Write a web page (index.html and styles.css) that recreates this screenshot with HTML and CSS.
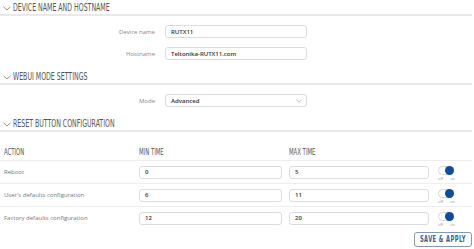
FILE: index.html
```html
<!DOCTYPE html>
<html lang="en">
<head>
  <meta charset="UTF-8" />
  <title>System - Administration</title>
  <link rel="stylesheet" href="styles.css">
</head>
<body>

<div class="page">

  <div class="section">
    <div class="section-head">
      <svg class="chev" width="8" height="5" viewBox="0 0 8 5"><path d="M0.5 0.8 L4 4 L7.5 0.8" fill="none" stroke="#888" stroke-width="0.9"/></svg>
      <span class="title">DEVICE NAME AND HOSTNAME</span>
    </div>
    <div class="field">
      <label>Device name</label>
      <div class="input">RUTX11</div>
    </div>
    <div class="field">
      <label>Hostname</label>
      <div class="input">Teltonika-RUTX11.com</div>
    </div>
  </div>

  <div class="section">
    <div class="section-head">
      <svg class="chev" width="8" height="5" viewBox="0 0 8 5"><path d="M0.5 0.8 L4 4 L7.5 0.8" fill="none" stroke="#888" stroke-width="0.9"/></svg>
      <span class="title">WEBUI MODE SETTINGS</span>
    </div>
    <div class="field">
      <label>Mode</label>
      <div class="input select">
        <span>Advanced</span>
        <svg width="6" height="4" viewBox="0 0 6 4"><path d="M0.5 0.7 L3 3.2 L5.5 0.7" fill="none" stroke="#aaa" stroke-width="0.8"/></svg>
      </div>
    </div>
  </div>

  <div class="section">
    <div class="section-head">
      <svg class="chev" width="8" height="5" viewBox="0 0 8 5"><path d="M0.5 0.8 L4 4 L7.5 0.8" fill="none" stroke="#888" stroke-width="0.9"/></svg>
      <span class="title">RESET BUTTON CONFIGURATION</span>
    </div>

    <div class="grid-head">
      <span>ACTION</span>
      <span>MIN TIME</span>
      <span>MAX TIME</span>
      <span></span>
    </div>
    <div id="rows"></div>

    <div class="actions">
      <button class="save"><span>SAVE &amp; APPLY</span></button>
    </div>
  </div>

</div>

<script>
const resetActions = [
  { name: "Reboot", min: 0, max: 5 },
  { name: "User's defaults configuration", min: 6, max: 11 },
  { name: "Factory defaults configuration", min: 12, max: 20 }
];

const rows = document.getElementById("rows");
resetActions.forEach(a => {
  const row = document.createElement("div");
  row.className = "grid-row";
  row.innerHTML = `
    <span class="action">${a.name}</span>
    <div class="input">${a.min}</div>
    <div class="input">${a.max}</div>
    <div class="switch">
      <div class="track"><div class="knob"></div></div>
      <div class="switch-labels"><span>off</span><span>on</span></div>
    </div>`;
  rows.appendChild(row);
});
</script>

</body>
</html>
```

FILE: styles.css
```css
body {
  margin: 0;
  font-family: "Open Sans", sans-serif;
  background: #fff;
  color: #666;
}

.page {
  width: 472px;
}

.section-head {
  display: flex;
  align-items: center;
  height: 14px;
  border-bottom: 2px solid #e9e9e9;
  padding-left: 3px;
}

.chev {
  margin-right: 2px;
  margin-top: 2px;
}

.title {
  font-family: "Liberation Sans Narrow", "DejaVu Sans Condensed", sans-serif;
  font-size: 11px;
  color: #555;
  display: inline-block;
  transform: scaleX(0.63);
  transform-origin: left center;
  white-space: nowrap;
}

.field {
  display: flex;
  align-items: center;
  margin-top: 9px;
}

.field:last-child {
  margin-bottom: 9px;
}

.field label {
  width: 155px;
  text-align: right;
  font-size: 6px;
  color: #888;
  padding-right: 10px;
}

.input {
  box-sizing: border-box;
  height: 13px;
  border: 1px solid #dcdcdc;
  border-radius: 3px;
  font-size: 6px;
  font-weight: 600;
  color: #333;
  padding-left: 5px;
  display: flex;
  align-items: center;
}

.field .input {
  width: 142px;
}

.select {
  justify-content: space-between;
  padding-right: 4px;
}

.grid-head,
.grid-row {
  display: grid;
  grid-template-columns: 135px 150px 148px 1fr;
  padding-left: 4px;
  align-items: center;
  border-bottom: 1px solid #eee;
}

.grid-head {
  margin-top: 11px;
  height: 17px;
}

.grid-head span {
  font-family: "Liberation Sans Narrow", "DejaVu Sans Condensed", sans-serif;
  font-size: 9px;
  color: #555;
  display: inline-block;
  transform: scaleX(0.66);
  transform-origin: left center;
  white-space: nowrap;
}

.grid-row {
  height: 22px;
}

.grid-row:last-child {
  border-bottom: none;
}

.grid-row .input {
  width: 143px;
}

.grid-row .input + .input {
  width: 140px;
}

.action {
  font-size: 6px;
  color: #777;
}

.switch {
  width: 17px;
  margin-left: 1px;
  margin-top: 2px;
}

.track {
  width: 14px;
  height: 7px;
  border: 1px solid #d6d6d6;
  border-radius: 5px;
  position: relative;
}

.knob {
  position: absolute;
  right: -1px;
  top: -1px;
  width: 9px;
  height: 9px;
  border-radius: 50%;
  background: #0f4c9c;
}

.switch-labels {
  display: flex;
  justify-content: space-between;
  font-size: 4px;
  line-height: 5px;
  color: #999;
  margin-top: 1px;
}

.actions {
  display: flex;
  justify-content: flex-end;
  margin-top: 3px;
}

.save {
  font-family: "Liberation Sans Narrow", "DejaVu Sans Condensed", sans-serif;
  font-weight: bold;
  font-size: 8px;
  letter-spacing: 0.6px;
  color: #3c5f86;
  background: #fff;
  border: 1px solid #7f9ab5;
  border-radius: 3px;
  width: 58px;
  height: 15px;
  padding: 0;
  display: flex;
  align-items: center;
  justify-content: center;
  white-space: nowrap;
}

.save span {
  display: inline-block;
  transform: scaleX(0.72);
}
```
